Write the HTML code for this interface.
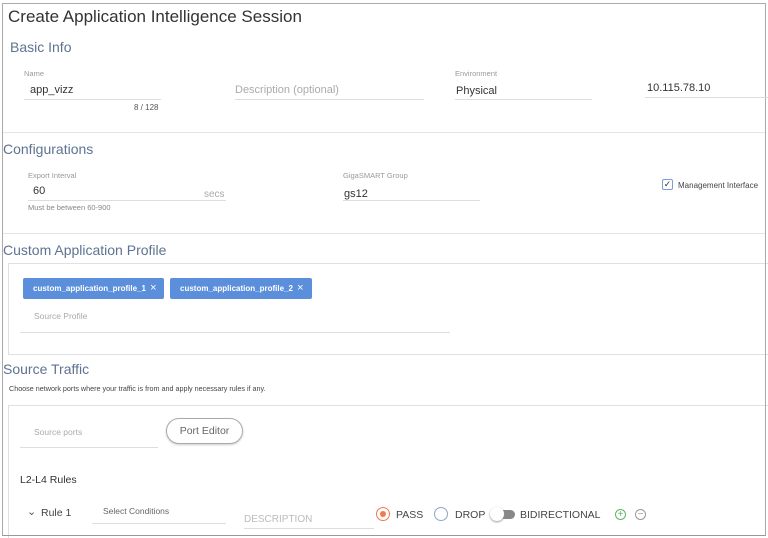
<!DOCTYPE html>
<html><head><style>
*{margin:0;padding:0;box-sizing:border-box}
html,body{width:768px;height:538px;overflow:hidden}
body{background:#fff;font-family:"Liberation Sans",sans-serif;position:relative;color:#333}
.a{position:absolute;white-space:nowrap}
.h{color:#5d7391;font-size:14px}
.lbl{font-size:7.5px;color:#999}
.v{font-size:11px;color:#333}
.ph{font-size:11px;color:#aaa}
.ln{position:absolute;height:1px;background:#ddd}
.chip{position:absolute;background:#5b8fdc;color:#fff;font-size:8px;font-weight:bold;height:21px;line-height:21px;padding-left:10px;border-radius:2px}
</style></head><body>
<div class="a" style="left:8px;top:263px;width:770px;height:92px;border:1px solid #e0e0e0"></div>
<div class="a" style="left:8px;top:405px;width:770px;height:135px;border:1px solid #e0e0e0"></div>
<div class="a" style="left:2px;top:3px;width:764px;height:533px;border:1px solid #aaa;border-bottom:1px solid #999"></div>
<div class="a" style="left:8px;top:7px;font-size:17px;color:#333">Create Application Intelligence Session</div>
<div class="a h" style="left:10px;top:39px">Basic Info</div>
<div class="a lbl" style="left:24px;top:69px">Name</div>
<div class="a v" style="left:30px;top:84px">app_vizz</div>
<div class="ln" style="left:24px;top:99px;width:137px"></div>
<div class="a" style="left:134px;top:103px;font-size:8px;color:#555">8 / 128</div>
<div class="a ph" style="left:235px;top:84px">Description (optional)</div>
<div class="ln" style="left:235px;top:99px;width:189px"></div>
<div class="a lbl" style="left:455px;top:69px">Environment</div>
<div class="a v" style="left:456px;top:85px">Physical</div>
<div class="ln" style="left:455px;top:99px;width:137px"></div>
<div class="a v" style="left:647px;top:82px">10.115.78.10</div>
<div class="ln" style="left:645px;top:97px;width:123px"></div>
<div class="ln" style="left:3px;top:132px;width:762px;background:#e4e4e4"></div>
<div class="a h" style="left:3px;top:141px">Configurations</div>
<div class="a lbl" style="left:28px;top:171px">Export Interval</div>
<div class="a v" style="left:33px;top:185px">60</div>
<div class="a" style="left:204px;top:189px;font-size:10px;color:#aaa">secs</div>
<div class="ln" style="left:28px;top:200px;width:198px"></div>
<div class="a lbl" style="left:28px;top:203px;color:#888">Must be between 60-900</div>
<div class="a lbl" style="left:343px;top:171px">GigaSMART Group</div>
<div class="a v" style="left:344px;top:188px">gs12</div>
<div class="ln" style="left:343px;top:200px;width:137px"></div>
<div class="a" style="left:662px;top:179px;width:11px;height:11px;border:1px solid #7a9fd8;border-radius:2px;font-size:9px;line-height:9px;text-align:center;color:#333">✓</div>
<div class="a" style="left:678px;top:181px;font-size:8px;color:#444">Management Interface</div>
<div class="ln" style="left:3px;top:233px;width:762px;background:#e4e4e4"></div>
<div class="a h" style="left:3px;top:242px">Custom Application Profile</div>
<div class="chip" style="left:23px;top:278px;width:141px">custom_application_profile_1 <span style="font-weight:normal;font-size:11px;margin-left:2px">×</span></div>
<div class="chip" style="left:170px;top:278px;width:142px">custom_application_profile_2 <span style="font-weight:normal;font-size:11px;margin-left:2px">×</span></div>
<div class="a" style="left:34px;top:311px;font-size:8.5px;color:#aaa">Source Profile</div>
<div class="ln" style="left:20px;top:332px;width:430px"></div>
<div class="a h" style="left:3px;top:361px">Source Traffic</div>
<div class="a" style="left:9px;top:384px;font-size:7.2px;color:#444">Choose network ports where your traffic is from and apply necessary rules if any.</div>
<div class="a" style="left:34px;top:427px;font-size:8.5px;color:#aaa">Source ports</div>
<div class="ln" style="left:20px;top:447px;width:138px"></div>
<div class="a" style="left:166px;top:418px;width:77px;height:26px;border:1px solid #aaa;border-radius:13px;font-size:10.5px;color:#666;text-align:center;line-height:24px;box-shadow:0 1px 2px #ccc">Port Editor</div>
<div class="a" style="left:20px;top:474px;font-size:10.5px;color:#333">L2-L4 Rules</div>
<div class="a" style="left:27px;top:505px;font-size:11px;color:#555">⌄</div>
<div class="a" style="left:41px;top:507px;font-size:10.5px;color:#444">Rule 1</div>
<div class="a" style="left:103px;top:506px;font-size:8.5px;color:#666">Select Conditions</div>
<div class="ln" style="left:92px;top:523px;width:134px"></div>
<div class="a" style="left:244px;top:514px;font-size:10px;color:#bbb">DESCRIPTION</div>
<div class="ln" style="left:244px;top:528px;width:130px"></div>
<div class="a" style="left:376px;top:507px;width:14px;height:14px;border:1.5px solid #f07a50;border-radius:50%"><div style="margin:2.5px;width:6px;height:6px;border-radius:50%;background:#f07a50"></div></div>
<div class="a" style="left:396px;top:509px;font-size:10.5px;color:#444">PASS</div>
<div class="a" style="left:434px;top:507px;width:14px;height:14px;border:1.2px solid #8aa6c8;border-radius:50%"></div>
<div class="a" style="left:455px;top:509px;font-size:10.5px;color:#444">DROP</div>
<div class="a" style="left:495px;top:510px;width:20px;height:9px;border-radius:5px;background:#888"></div>
<div class="a" style="left:490px;top:507px;width:14px;height:14px;border-radius:50%;background:#fff;box-shadow:0 1px 2px #999"></div>
<div class="a" style="left:520px;top:509px;font-size:10.5px;color:#444">BIDIRECTIONAL</div>
<div class="a" style="left:615px;top:509px;width:11px;height:11px;border:1px solid #5cb85c;border-radius:50%;color:#5cb85c;font-size:10px;line-height:9px;text-align:center">+</div>
<div class="a" style="left:635px;top:509px;width:11px;height:11px;border:1px solid #999;border-radius:50%;color:#999;font-size:10px;line-height:9px;text-align:center">−</div>
</body></html>
